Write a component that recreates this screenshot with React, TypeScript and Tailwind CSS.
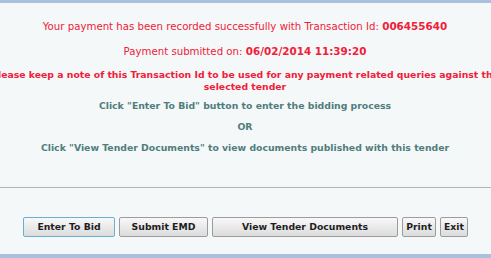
import React from "react";

const font = { fontFamily: '"DejaVu Sans", Verdana, sans-serif' };

export default function App() {
  return (
    <div
      className="w-[491px] h-[258px] overflow-hidden bg-[#f4f8f8] flex flex-col text-[10.2px]"
      style={font}
    >
      <div className="h-[3px] bg-[#a9c1df]" />

      {/* Messages */}
      <div className="w-[530px] -ml-[20px] flex flex-col items-center text-center leading-[13px] pt-[17px]">
        <p className="text-[#f0203a]">
          Your payment has been recorded successfully with Transaction Id:{" "}
          <b className="text-[10.4px]">006455640</b>
        </p>
        <p className="text-[#f0203a] mt-[12px]">
          Payment submitted on: <b className="text-[10.4px]">06/02/2014 11:39:20</b>
        </p>
        <p className="text-[#f0203a] font-bold text-[9.3px] mt-[11px] leading-[12px]">
          Please keep a note of this Transaction Id to be used for any payment related queries against the selected tender
        </p>
        <p className="text-[#4f7d7d] font-bold text-[9.3px] mt-[6px]">
          Click "Enter To Bid" button to enter the bidding process
        </p>
        <p className="text-[#4f7d7d] font-bold text-[9.3px] mt-[8px]">OR</p>
        <p className="text-[#4f7d7d] font-bold text-[9.3px] mt-[8px]">
          Click "View Tender Documents" to view documents published with this tender
        </p>
      </div>

      <div className="mt-auto h-px bg-[#b4b4b4] mb-[29px]" />

      {/* Buttons */}
      <div className="flex gap-[4px] pl-[23px] mb-[17px] text-[9.3px]">
        <button className="w-[92px] h-[20px] rounded-[2px] border border-[#6aaed6] bg-gradient-to-b from-[#f8f8f8] to-[#dcdcdc] font-bold text-[#1e1e1e]">
          Enter To Bid
        </button>
        <button className="w-[89px] h-[20px] rounded-[2px] border border-[#9c9c9c] bg-gradient-to-b from-[#f8f8f8] to-[#dcdcdc] font-bold text-[#1e1e1e]">
          Submit EMD
        </button>
        <button className="w-[186px] h-[20px] rounded-[2px] border border-[#9c9c9c] bg-gradient-to-b from-[#f8f8f8] to-[#dcdcdc] font-bold text-[#1e1e1e]">
          View Tender Documents
        </button>
        <button className="w-[34px] h-[20px] rounded-[2px] border border-[#9c9c9c] bg-gradient-to-b from-[#f8f8f8] to-[#dcdcdc] font-bold text-[#1e1e1e]">
          Print
        </button>
        <button className="w-[28px] h-[20px] rounded-[2px] border border-[#9c9c9c] bg-gradient-to-b from-[#f8f8f8] to-[#dcdcdc] font-bold text-[#1e1e1e]">
          Exit
        </button>
      </div>

      <div className="h-[4px] bg-[#a9c1df]" />
    </div>
  );
}
